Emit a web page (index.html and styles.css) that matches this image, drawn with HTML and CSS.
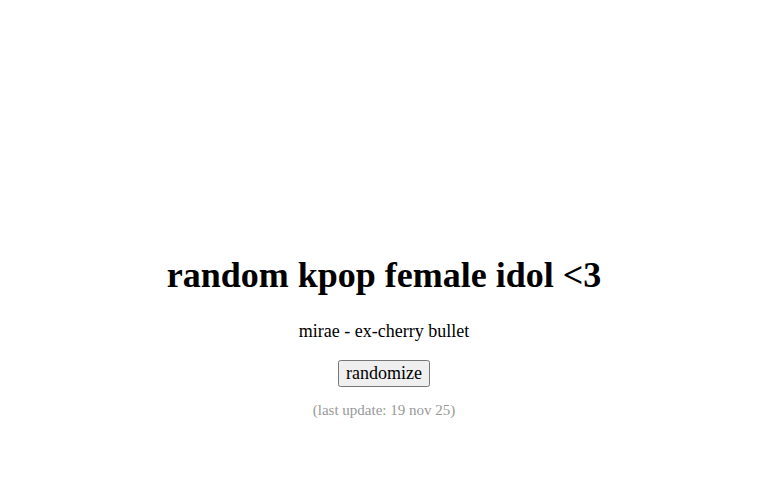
FILE: index.html
```html
<!DOCTYPE html>
<html lang="en">
<head>
    <meta charset="UTF-8">
    <title>random kpop female idol</title>
    <link rel="stylesheet" href="styles.css">
</head>
<body>
<div class="wrap">
    <h1 class="title">random kpop female idol &lt;3</h1>
    <p class="idol" id="idol">mirae - ex-cherry bullet</p>
    <button class="btn" id="btn">randomize</button>
    <p class="update">(last update: 19 nov 25)</p>
</div>
</body>
</html>
```

FILE: styles.css
```css
body{
    margin:0;
    font-family:"Liberation Serif", serif;
    color:#000;
    background:#fff;
}
.wrap{
    min-height:100vh;
    display:flex;
    flex-direction:column;
    align-items:center;
    justify-content:center;
    padding-top:192px;
    box-sizing:border-box;
    text-align:center;
}
.title{
    font-size:36px;
    margin:0 0 25px;
}
.idol{
    font-size:18px;
    margin:0 0 18px;
}
.btn{
    font-family:"Liberation Serif", serif;
    font-size:18px;
    padding:1px 6px;
}
.update{
    font-size:15px;
    color:#999;
    margin:15px 0 0;
}
```
